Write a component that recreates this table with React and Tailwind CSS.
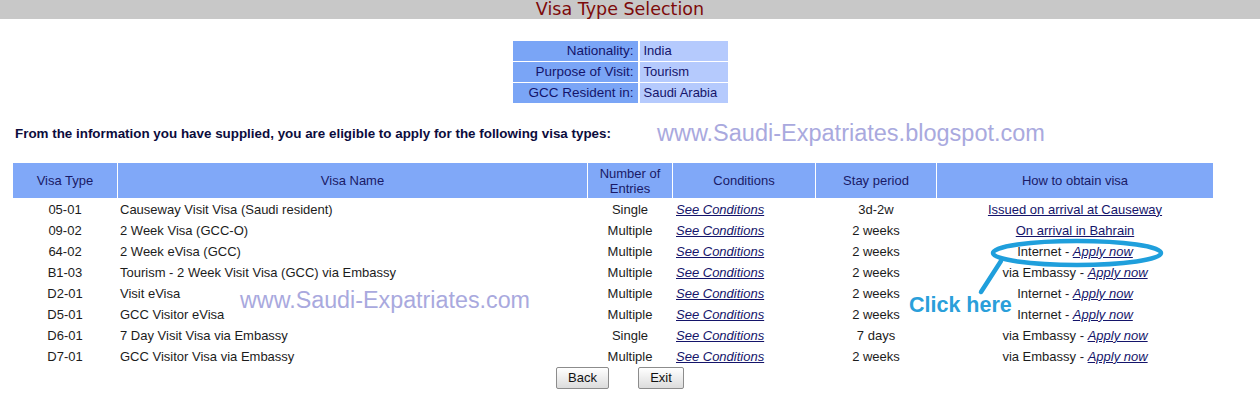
import React from 'react';

const info = [
  ['Nationality:', 'India'],
  ['Purpose of Visit:', 'Tourism'],
  ['GCC Resident in:', 'Saudi Arabia'],
];

const visas = [
  { code: '05-01', name: 'Causeway Visit Visa (Saudi resident)', entries: 'Single', stay: '3d-2w', how: null, link: 'Issued on arrival at Causeway' },
  { code: '09-02', name: '2 Week Visa (GCC-O)', entries: 'Multiple', stay: '2 weeks', how: null, link: 'On arrival in Bahrain' },
  { code: '64-02', name: '2 Week eVisa (GCC)', entries: 'Multiple', stay: '2 weeks', how: 'Internet' },
  { code: 'B1-03', name: 'Tourism - 2 Week Visit Visa (GCC) via Embassy', entries: 'Multiple', stay: '2 weeks', how: 'via Embassy' },
  { code: 'D2-01', name: 'Visit eVisa', entries: 'Multiple', stay: '2 weeks', how: 'Internet' },
  { code: 'D5-01', name: 'GCC Visitor eVisa', entries: 'Multiple', stay: '2 weeks', how: 'Internet' },
  { code: 'D6-01', name: '7 Day Visit Visa via Embassy', entries: 'Single', stay: '7 days', how: 'via Embassy' },
  { code: 'D7-01', name: 'GCC Visitor Visa via Embassy', entries: 'Multiple', stay: '2 weeks', how: 'via Embassy' },
];

function Btn({ children, className = '' }) {
  return (
    <button
      className={`h-[22px] rounded-[2px] border border-[#8c8c8c] bg-gradient-to-b from-white to-[#dcdcdc] text-[13px] text-[#111] ${className}`}
    >
      {children}
    </button>
  );
}

export default function App() {
  return (
    <div className="relative w-[1260px] h-[400px] overflow-hidden bg-white font-['Liberation_Sans',Arial,sans-serif] text-[13px]">
      {/* title bar */}
      <div className="h-[19px] bg-[#c8c8c8]">
        <div className="w-[1240px] text-center font-['DejaVu_Sans',sans-serif] text-[17.5px] leading-[19px] text-[#7d0a0a]">
          Visa Type Selection
        </div>
      </div>

      <div className="w-[1240px]">
        {/* applicant info */}
        <div className="flex justify-center pt-[21px]">
          <table className="border-separate [border-spacing:2px_1px] text-[#14146a]">
            <tbody>
              {info.map(([k, v]) => (
                <tr key={k}>
                  <td className="w-[125px] h-[20px] bg-[#7aa5f6] pr-[4px] text-right leading-[20px] text-[13.5px]">{k}</td>
                  <td className="w-[88px] h-[20px] bg-[#b5cafd] pl-[4px] leading-[20px]">{v}</td>
                </tr>
              ))}
            </tbody>
          </table>
        </div>

        {/* eligibility line */}
        <div className="flex items-center mt-[17px] h-[26px]">
          <span className="ml-[15px] text-[13.4px] font-bold text-[#0c0c3c]">
            From the information you have supplied, you are eligible to apply for the following visa types:
          </span>
          <span className="ml-[46px] text-[23.5px] text-[#a9a9de]">www.Saudi-Expatriates.blogspot.com</span>
        </div>

        {/* visa table */}
        <table className="ml-[12px] mt-[16px] w-[1202px] table-fixed border-separate [border-spacing:1px_0]">
          <thead>
            <tr className="bg-[#80a8f8] text-[#1a1a66] font-normal">
              <th className="w-[104px] h-[35px] font-normal">Visa Type</th>
              <th className="w-[469px] font-normal">Visa Name</th>
              <th className="w-[84px] font-normal leading-[15px]">Number of<br />Entries</th>
              <th className="w-[142px] font-normal">Conditions</th>
              <th className="w-[120px] font-normal">Stay period</th>
              <th className="font-normal">How to obtain visa</th>
            </tr>
          </thead>
          <tbody className="text-[#1c1c1c]">
            <tr><td colSpan={6} className="h-[1px] p-0" /></tr>
            {visas.map((v) => (
              <tr key={v.code} className="h-[21px]">
                <td className="text-center">{v.code}</td>
                <td className="pl-[2px]">{v.name}</td>
                <td className="text-center">{v.entries}</td>
                <td className="pl-[3px]">
                  <a className="italic underline text-[#14146a]">See Conditions</a>
                </td>
                <td className="text-center">{v.stay}</td>
                <td className="text-center">
                  {v.how ? (
                    <>
                      {v.how} - <a className="italic underline text-[#14146a]">Apply now</a>
                    </>
                  ) : (
                    <a className="underline text-[#14146a]">{v.link}</a>
                  )}
                </td>
              </tr>
            ))}
          </tbody>
        </table>

        <div className="flex justify-center gap-[29px] mt-[0px]">
          <Btn className="w-[53px]">Back</Btn>
          <Btn className="w-[46px]">Exit</Btn>
        </div>
      </div>

      {/* overlays: watermark and annotation */}
      <span className="absolute left-[240px] top-[283px] text-[23.3px] text-[#a9a9de]">www.Saudi-Expatriates.com</span>
      <svg className="absolute left-0 top-0 pointer-events-none" width="1260" height="400">
        <ellipse cx="1077" cy="253" rx="84" ry="12" fill="none" stroke="#1f9fdc" strokeWidth="4.5" />
        <line x1="1001" y1="261" x2="981" y2="292" stroke="#1f9fdc" strokeWidth="4.5" strokeLinecap="round" />
      </svg>
      <span className="absolute left-[909px] top-[289px] text-[21.5px] font-bold text-[#2a9fda]">Click here</span>
    </div>
  );
}
